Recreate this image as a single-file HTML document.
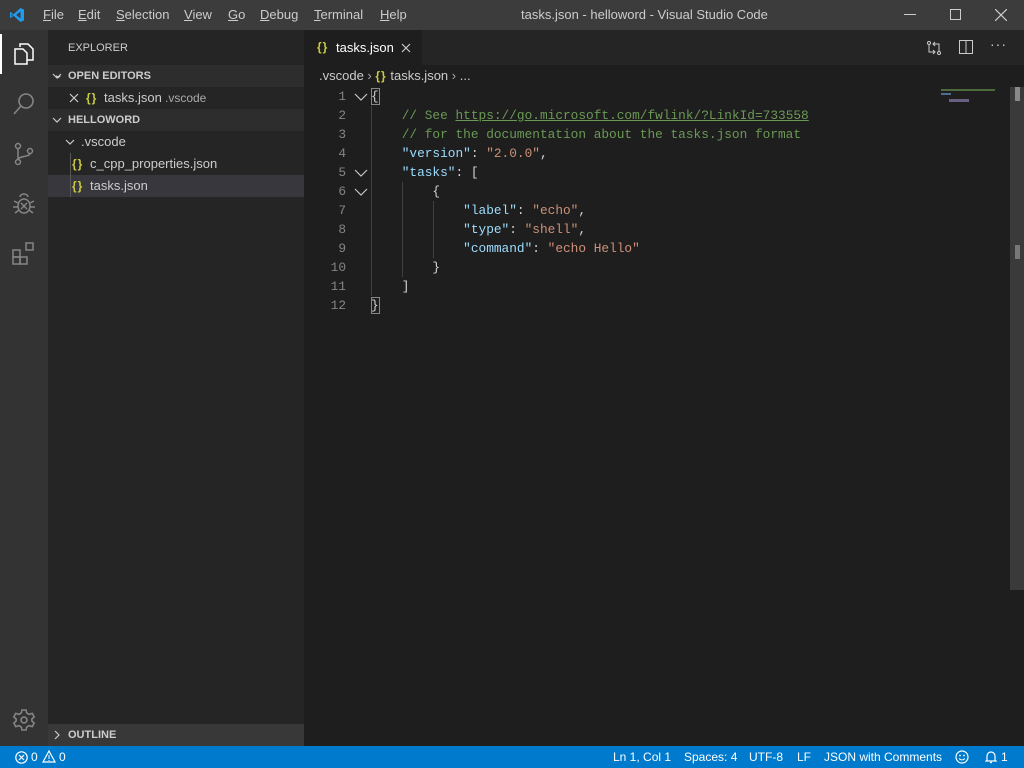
<!DOCTYPE html>
<html><head><meta charset="utf-8"><style>
*{margin:0;padding:0;box-sizing:border-box}
body{width:1024px;height:768px;overflow:hidden;background:#1e1e1e;font-family:"Liberation Sans",sans-serif;font-size:13px;color:#ccc;position:relative}
.abs{position:absolute}
#title{left:0;top:0;width:1024px;height:30px;background:#3c3c3c}
.menu{top:7px;font-size:13px;color:#ccc}
#act{left:0;top:30px;width:48px;height:716px;background:#333}
#side{left:48px;top:30px;width:256px;height:716px;background:#252526}
.row{position:absolute;left:0;width:256px;height:22px;line-height:22px;font-size:13px;color:#ccc}
.hdr{font-weight:bold;font-size:11px;color:#ccc;background:#2d2d2e}
.br{color:#cbcb41;font-weight:bold;font-size:12px;letter-spacing:1px}
#tabs{left:304px;top:30px;width:720px;height:35px;background:#252526}
#code{left:304px;top:87px;font-family:"Liberation Mono",monospace;font-size:12.8px}
.ln{position:absolute;left:0;width:42px;text-align:right;color:#858585;height:19px;line-height:19px}
.cl{position:absolute;left:67px;height:19px;line-height:19px;white-space:pre;color:#d4d4d4}
.c{color:#6a9955}.k{color:#9cdcfe}.s{color:#ce9178}
#status{left:0;top:746px;width:1024px;height:22px;background:#007acc;color:#fff;font-size:12px;line-height:22px}
</style></head><body>
<div id="title" class="abs">
<svg class="abs" style="left:9px;top:7px" width="16" height="16" viewBox="0 0 16 16"><path d="M11.5 1 L15 2.6 V13.4 L11.5 15 L4.5 8.8 L1.8 11 L1 10.5 V5.5 L1.8 5 L4.5 7.2 Z M11.5 4.5 L7.2 8 L11.5 11.5Z M2.5 6.5 V9.5 L4 8Z" fill="#1f9cf0" fill-rule="evenodd"/></svg>
<span class="abs menu" style="left:43px"><u>F</u>ile</span>
<span class="abs menu" style="left:78px"><u>E</u>dit</span>
<span class="abs menu" style="left:116px"><u>S</u>election</span>
<span class="abs menu" style="left:184px"><u>V</u>iew</span>
<span class="abs menu" style="left:228px"><u>G</u>o</span>
<span class="abs menu" style="left:260px"><u>D</u>ebug</span>
<span class="abs menu" style="left:314px"><u>T</u>erminal</span>
<span class="abs menu" style="left:380px"><u>H</u>elp</span>
<span class="abs menu" style="left:521px">tasks.json - helloword - Visual Studio Code</span>
<div class="abs" style="left:904px;top:14px;width:12px;height:1px;background:#ccc"></div>
<div class="abs" style="left:950px;top:9px;width:11px;height:11px;border:1px solid #ccc"></div>
<svg class="abs" style="left:995px;top:9px" width="12" height="12"><path d="M0 0L12 12M12 0L0 12" stroke="#ccc" stroke-width="1.2"/></svg>
</div>
<div id="act" class="abs">
<div class="abs" style="left:0;top:4px;width:2px;height:40px;background:#fff"></div>
<svg class="abs" style="left:12px;top:12px" width="24" height="24" viewBox="0 0 24 24" fill="none" stroke="#fff" stroke-width="1.5"><path d="M8 5V2H16L21 7V18H15"/><path d="M3 7H11L15 11V22H3Z"/></svg>
<svg class="abs" style="left:12px;top:62px" width="24" height="24" viewBox="0 0 24 24" fill="none" stroke="#858585" stroke-width="1.6"><circle cx="14" cy="9" r="7"/><path d="M9 14L2 22"/></svg>
<svg class="abs" style="left:12px;top:112px" width="24" height="24" viewBox="0 0 24 24" fill="none" stroke="#858585" stroke-width="1.5"><circle cx="6" cy="4" r="2.5"/><circle cx="6" cy="20" r="2.5"/><circle cx="18" cy="9" r="2.5"/><path d="M6 6.5V17.5M18 11.5C18 15 6 14 6 17.5"/></svg>
<svg class="abs" style="left:12px;top:162px" width="24" height="24" viewBox="0 0 24 24" fill="none" stroke="#858585" stroke-width="1.5"><path d="M8 5a4 3 0 0 1 8 0"/><ellipse cx="12" cy="14" rx="6" ry="7"/><path d="M9 11L15 17M15 11L9 17M2 9L6 11M22 9L18 11M1 15H6M23 15H18M3 21L7 18M21 21L17 18"/></svg>
<svg class="abs" style="left:12px;top:212px" width="24" height="24" viewBox="0 0 24 24" fill="none" stroke="#858585" stroke-width="1.5"><rect x="1" y="8" width="7" height="7"/><rect x="1" y="15" width="7" height="7"/><rect x="8" y="15" width="7" height="7"/><rect x="14" y="1" width="7" height="7"/></svg>
<svg class="abs" style="left:12px;top:678px" width="24" height="24" viewBox="0 0 24 24" fill="none" stroke="#858585" stroke-width="1.6"><circle cx="12" cy="12" r="3"/><path d="M10 2h4l.7 3 2.5 1.4 3-1 2 3.5-2.3 2v2.2l2.3 2-2 3.5-3-1-2.5 1.4-.7 3h-4l-.7-3-2.5-1.4-3 1-2-3.5 2.3-2V10.9L1.8 8.9l2-3.5 3 1L9.3 5z"/></svg>
</div>
<div id="side" class="abs">
<div class="row" style="top:7px;left:20px;font-size:11px">EXPLORER</div>
<div class="row hdr" style="top:35px"><span style="position:absolute;left:6px;font-size:10px">&#8964;</span><svg class="abs" style="left:4px;top:6px" width="10" height="10"><path d="M1 3L5 7L9 3" stroke="#ccc" fill="none" stroke-width="1.2"/></svg><span style="position:absolute;left:20px">OPEN EDITORS</span></div>
<div class="row" style="top:57px"><svg class="abs" style="left:21px;top:6px" width="10" height="10"><path d="M1 1L9 9M9 1L1 9" stroke="#ccc" stroke-width="1.2"/></svg><span class="abs br" style="left:38px">{}</span><span class="abs" style="left:56px">tasks.json</span><span class="abs" style="left:117px;font-size:12px;color:#aaa">.vscode</span></div>
<div class="row hdr" style="top:79px"><svg class="abs" style="left:4px;top:6px" width="10" height="10"><path d="M1 3L5 7L9 3" stroke="#ccc" fill="none" stroke-width="1.2"/></svg><span style="position:absolute;left:20px">HELLOWORD</span></div>
<div class="row" style="top:101px"><svg class="abs" style="left:17px;top:6px" width="10" height="10"><path d="M1 3L5 7L9 3" stroke="#ccc" fill="none" stroke-width="1.2"/></svg><span class="abs" style="left:33px">.vscode</span></div>
<div class="row" style="top:123px"><span class="abs br" style="left:24px">{}</span><span class="abs" style="left:42px">c_cpp_properties.json</span></div>
<div class="row" style="top:145px;background:#37373d"><span class="abs br" style="left:24px">{}</span><span class="abs" style="left:42px">tasks.json</span></div>
<div class="abs" style="left:22px;top:123px;width:1px;height:44px;background:#585858"></div>
<div class="row hdr" style="top:694px;background:#383838"><svg class="abs" style="left:4px;top:6px" width="10" height="10"><path d="M3 1L7 5L3 9" stroke="#ccc" fill="none" stroke-width="1.2"/></svg><span style="position:absolute;left:20px">OUTLINE</span></div>
</div>
<div id="tabs" class="abs">
<div class="abs" style="left:0;top:0;width:118px;height:35px;background:#1e1e1e">
<span class="abs br" style="left:13px;top:10px">{}</span><span class="abs" style="left:32px;top:10px;color:#fff">tasks.json</span>
<svg class="abs" style="left:97px;top:13px" width="10" height="10"><path d="M1 1L9 9M9 1L1 9" stroke="#ccc" stroke-width="1.2"/></svg></div>
<svg class="abs" style="left:622px;top:10px" width="16" height="16" viewBox="0 0 16 16" fill="none" stroke="#ccc" stroke-width="1"><circle cx="3" cy="3" r="1.5"/><circle cx="13" cy="13" r="1.5"/><path d="M3 5V12H9M7 10L9 12L7 14M13 11V4H7M9 2L7 4L9 6"/></svg>
<svg class="abs" style="left:655px;top:10px" width="14" height="14"><rect x="0.5" y="0.5" width="13" height="13" stroke="#ccc" fill="none"/><path d="M7 0V14" stroke="#ccc"/></svg>
<span class="abs" style="left:686px;top:6px;color:#ccc;font-size:14px;letter-spacing:1px">&middot;&middot;&middot;</span>
</div>
<div class="abs" style="left:319px;top:68px;color:#ccc">.vscode <span style="color:#aaa">&#8250;</span> <span class="br">{}</span> tasks.json <span style="color:#aaa">&#8250;</span> ...</div>
<div id="code" class="abs">
<div class="ln" style="top:0">1</div><div class="ln" style="top:19px">2</div><div class="ln" style="top:38px">3</div><div class="ln" style="top:57px">4</div><div class="ln" style="top:76px">5</div><div class="ln" style="top:95px">6</div><div class="ln" style="top:114px">7</div><div class="ln" style="top:133px">8</div><div class="ln" style="top:152px">9</div><div class="ln" style="top:171px">10</div><div class="ln" style="top:190px">11</div><div class="ln" style="top:209px">12</div>
<svg class="abs" style="left:50px;top:5px" width="14" height="10"><path d="M1 2L7 8L13 2" stroke="#c5c5c5" fill="none" stroke-width="1.2"/></svg>
<svg class="abs" style="left:50px;top:81px" width="14" height="10"><path d="M1 2L7 8L13 2" stroke="#c5c5c5" fill="none" stroke-width="1.2"/></svg>
<svg class="abs" style="left:50px;top:100px" width="14" height="10"><path d="M1 2L7 8L13 2" stroke="#c5c5c5" fill="none" stroke-width="1.2"/></svg>
<div class="abs" style="left:67px;top:19px;width:1px;height:190px;background:#404040"></div>
<div class="abs" style="left:98px;top:95px;width:1px;height:95px;background:#404040"></div>
<div class="abs" style="left:129px;top:114px;width:1px;height:57px;background:#404040"></div>
<div class="abs" style="left:67px;top:1px;width:9px;height:17px;border:1px solid #888"></div>
<div class="abs" style="left:67px;top:210px;width:9px;height:17px;border:1px solid #888"></div>
<div class="cl" style="top:0">{</div>
<div class="cl c" style="top:19px">    // See <span style="text-decoration:underline">https://go.microsoft.com/fwlink/?LinkId=733558</span></div>
<div class="cl c" style="top:38px">    // for the documentation about the tasks.json format</div>
<div class="cl" style="top:57px">    <span class="k">"version"</span>: <span class="s">"2.0.0"</span>,</div>
<div class="cl" style="top:76px">    <span class="k">"tasks"</span>: [</div>
<div class="cl" style="top:95px">        {</div>
<div class="cl" style="top:114px">            <span class="k">"label"</span>: <span class="s">"echo"</span>,</div>
<div class="cl" style="top:133px">            <span class="k">"type"</span>: <span class="s">"shell"</span>,</div>
<div class="cl" style="top:152px">            <span class="k">"command"</span>: <span class="s">"echo Hello"</span></div>
<div class="cl" style="top:171px">        }</div>
<div class="cl" style="top:190px">    ]</div>
<div class="cl" style="top:209px">}</div>
</div>
<div class="abs" style="left:941px;top:89px;width:54px;height:2px;background:#4d6a3a"></div>
<div class="abs" style="left:941px;top:93px;width:10px;height:2px;background:#4a7090"></div>
<div class="abs" style="left:949px;top:99px;width:20px;height:3px;background:#6a6080"></div>
<div class="abs" style="left:1010px;top:87px;width:14px;height:503px;background:#3a3a3a"></div>
<div class="abs" style="left:1015px;top:87px;width:5px;height:14px;background:#888"></div>
<div class="abs" style="left:1015px;top:245px;width:5px;height:14px;background:#777"></div>
<div id="status" class="abs">
<svg class="abs" style="left:15px;top:5px" width="13" height="13"><circle cx="6.5" cy="6.5" r="5.7" stroke="#fff" fill="none" stroke-width="1.2"/><path d="M4 4L9 9M9 4L4 9" stroke="#fff" stroke-width="1.2"/></svg>
<span class="abs" style="left:31px">0</span>
<svg class="abs" style="left:42px;top:4px" width="14" height="13"><path d="M7 1L13 12H1Z" stroke="#fff" fill="none" stroke-width="1.2"/><path d="M7 5V9M7 10V11" stroke="#fff"/></svg>
<span class="abs" style="left:59px">0</span>
<span class="abs" style="left:613px">Ln 1, Col 1</span>
<span class="abs" style="left:684px">Spaces: 4</span>
<span class="abs" style="left:749px">UTF-8</span>
<span class="abs" style="left:797px">LF</span>
<span class="abs" style="left:824px">JSON with Comments</span>
<svg class="abs" style="left:955px;top:4px" width="14" height="14"><circle cx="7" cy="7" r="6" stroke="#fff" fill="none" stroke-width="1.2"/><circle cx="5" cy="5.5" r=".9" fill="#fff"/><circle cx="9" cy="5.5" r=".9" fill="#fff"/><path d="M4 8.5Q7 11.5 10 8.5" stroke="#fff" fill="none"/></svg>
<svg class="abs" style="left:985px;top:4px" width="12" height="14"><path d="M2 10V6a4 4 0 0 1 8 0V10L11 11H1Z M5 12.5H7" stroke="#fff" fill="none" stroke-width="1.2"/></svg>
<span class="abs" style="left:1001px">1</span>
</div>
</body></html>
